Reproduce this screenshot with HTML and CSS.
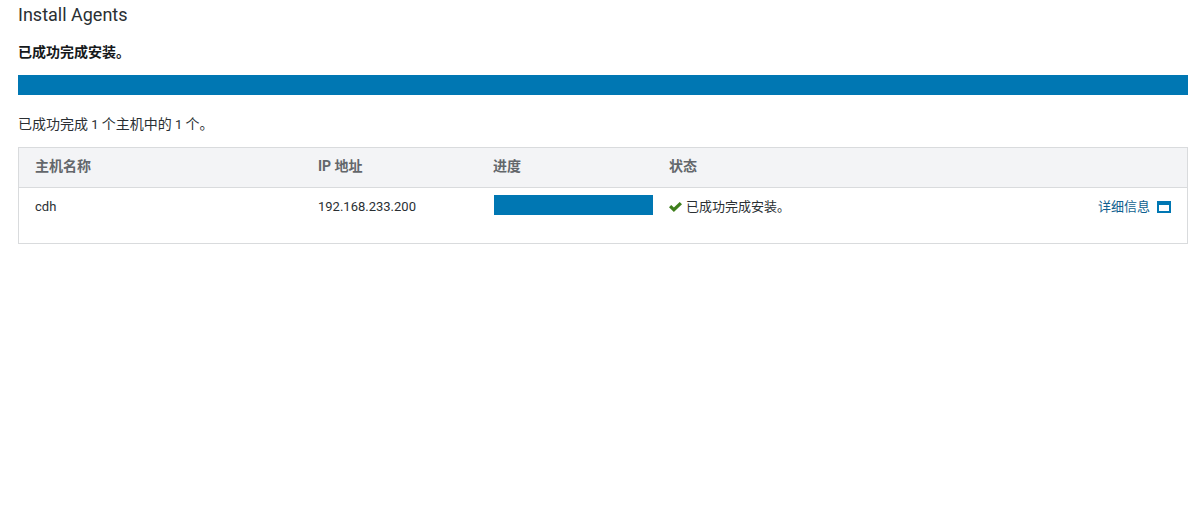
FILE: index.html
```html
<!DOCTYPE html>
<html lang="zh">
<head>
<meta charset="utf-8">
<title>Install Agents</title>
<link rel="stylesheet" href="styles.css">
</head>
<body>
<main class="page">
  <h1 class="title">Install Agents</h1>
  <p class="summary cjk">已成功完成安装。</p>
  <div class="bar bar-main"></div>
  <p class="count"><span class="cjk">已成功完成</span> 1 <span class="cjk">个主机中的</span> 1 <span class="cjk">个。</span></p>
  <table class="hosts">
    <colgroup>
      <col class="col-host"><col class="col-ip"><col class="col-progress"><col class="col-status"><col class="col-action">
    </colgroup>
    <thead>
      <tr><th>主机名称</th><th>IP 地址</th><th>进度</th><th>状态</th><th></th></tr>
    </thead>
    <tbody>
      <tr>
        <td>cdh</td>
        <td>192.168.233.200</td>
        <td class="progress-cell"><div class="bar bar-row"></div></td>
        <td class="status-cell"><svg class="check" viewBox="0 0 13 10" width="13" height="10" aria-hidden="true"><path d="M0 5.2 L2.2 3 L4.9 5.6 L10.7 0 L13 2.2 L4.9 10 Z" fill="#3f7f1c"/></svg><span>已成功完成安装。</span></td>
        <td class="action-cell">
          <a class="details" href="#">详细信息<svg class="window" viewBox="0 0 14 12" width="14" height="12" aria-hidden="true"><rect x="1" y="1" width="12" height="10" fill="#fff" stroke="#0077b3" stroke-width="2"/><rect x="1" y="1" width="12" height="3" fill="#0077b3"/></svg></a>
        </td>
      </tr>
    </tbody>
  </table>
</main>
</body>
</html>
```

FILE: styles.css
```css
* { box-sizing: border-box; }
html, body { margin: 0; background: #fff; }
body {
  font-family: Roboto, "Noto Sans CJK SC", sans-serif;
  font-size: 13px;
  color: #2a2f33;
}
.cjk { font-size: 14px; }
.page { padding: 4px 8px 0 18px; }
.title {
  margin: 0;
  font-size: 18px;
  line-height: 21px;
  font-weight: 400;
  color: #2a2f33;
}
.summary {
  margin: 17px 0 0;
  line-height: 20px;
  font-weight: 700;
  color: #16191b;
}
.bar { background: #0077b3; }
.bar-main { height: 20px; margin-top: 13px; }
.count { margin: 19px 0 0; line-height: 20px; }
.hosts {
  width: 1170px;
  margin-top: 12px;
  border: 1px solid #d9dbdd;
  border-collapse: separate;
  border-spacing: 0;
  table-layout: fixed;
}
.col-host { width: 283px; }
.col-ip { width: 175px; }
.col-progress { width: 176px; }
.col-action { width: 160px; }
th {
  height: 40px;
  padding: 0 16px 5px;
  text-align: left;
  font-size: 14px;
  font-weight: 700;
  color: #63676b;
  background: #f3f4f6;
  border-bottom: 1px solid #d9dbdd;
}
td {
  height: 55px;
  padding: 9px 16px 0;
  vertical-align: top;
  line-height: 20px;
}
.progress-cell { padding: 7px 0 0 17px; }
.bar-row { height: 20px; }
.status-cell { white-space: nowrap; }
.check { vertical-align: -1px; margin-right: 4px; }
.action-cell { text-align: right; }
.details { color: #0f5f8f; text-decoration: none; white-space: nowrap; }
.window { vertical-align: -2px; margin-left: 7px; }
```
